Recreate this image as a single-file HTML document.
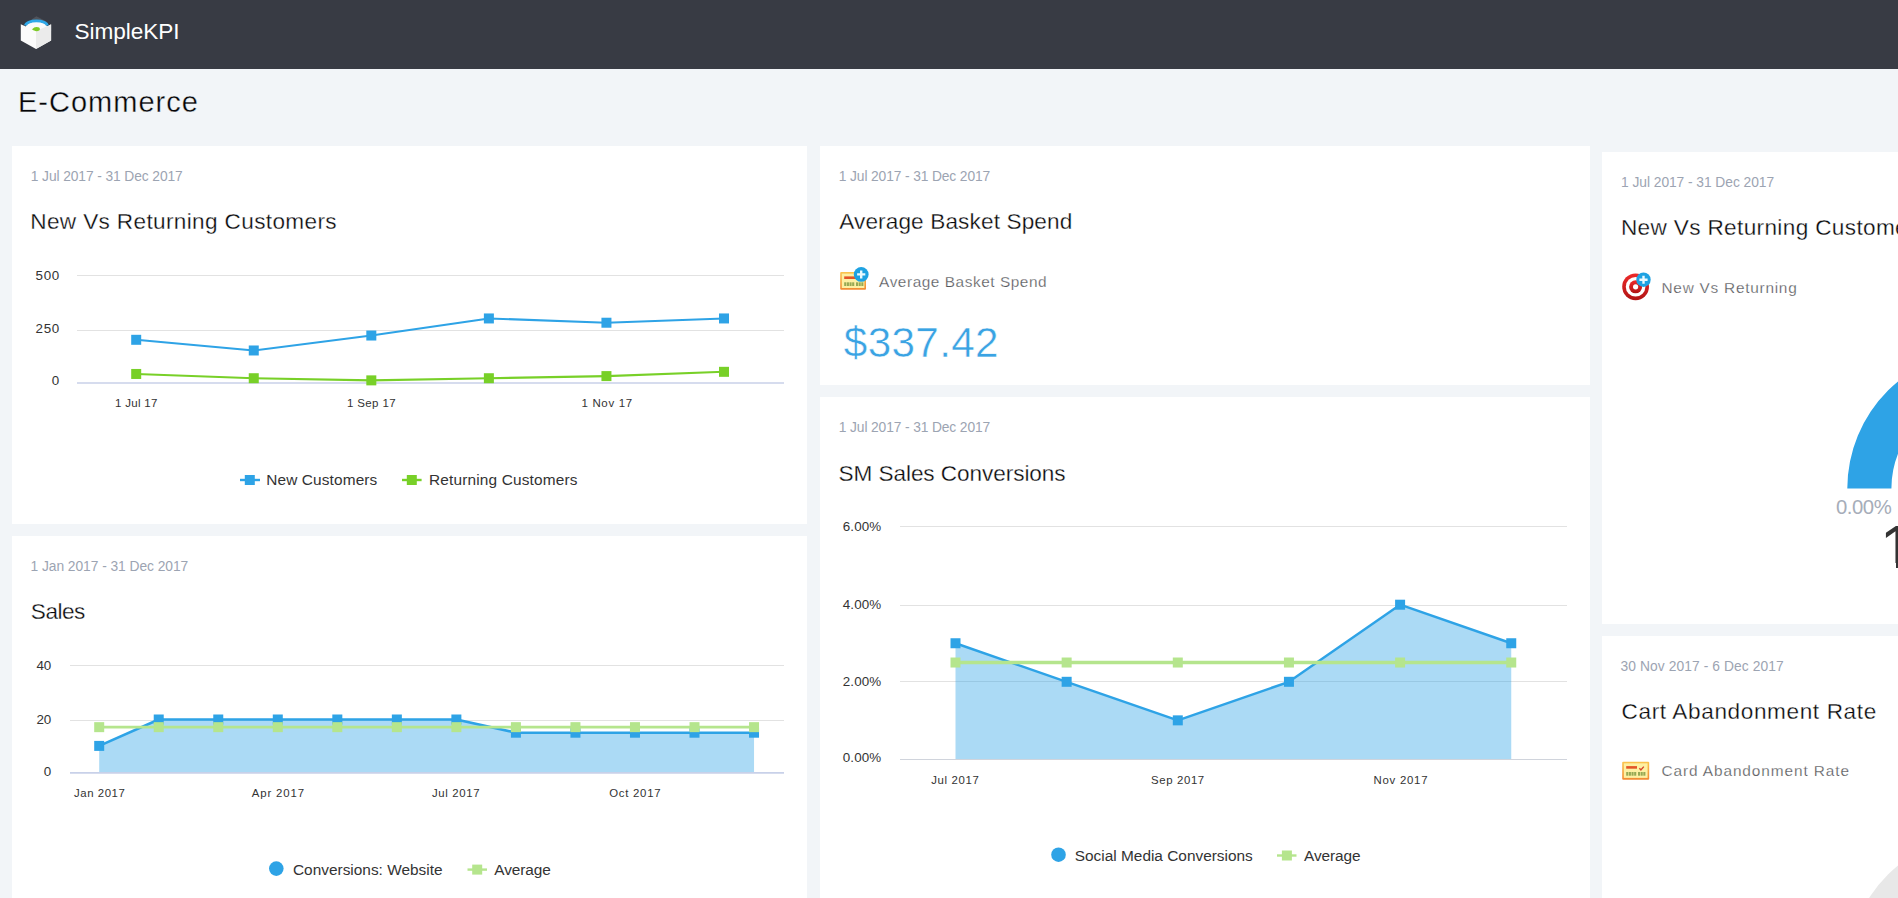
<!DOCTYPE html>
<html lang="en"><head><meta charset="utf-8"><title>SimpleKPI - E-Commerce</title>
<style>
*{box-sizing:border-box}
html,body{margin:0;padding:0}
body{width:1898px;height:898px;overflow:hidden;background:#f2f5f8;font-family:"Liberation Sans", Arial, sans-serif;position:relative}
.hdr{position:absolute;left:0;top:0;width:1898px;height:68.6px;background:#383b44}
.logo{position:absolute;left:14px;top:10px}
.card{position:absolute;background:#fff;overflow:hidden}
.t{position:absolute;white-space:nowrap;font-weight:400}
.chart{position:absolute;left:0;top:0;display:block}
.foot{position:absolute;background:#fff}
</style></head><body>
<header class="hdr"><svg class="logo" width="44" height="44" viewBox="14 10 44 44">
<path d="M31.5 19.6 L36.4 16.2 L46.5 21.6 L44 23.5 Z" fill="#7d8088" opacity=".35"/>
<path d="M20.8 24.2 L25.8 26.4 A10.6 4.6 0 0 1 47 26.4 L51.1 24.2 L51.1 40.6 L36 48.9 L20.8 40.6 Z" fill="#fbfbfb"/>
<path d="M36 31 L51.1 24.4 L51.1 40.6 L36 48.9 Z" fill="#ebebeb"/>
<path d="M25.6 25.4 A10.8 4.5 0 0 1 47.2 25.4" fill="none" stroke="#2fa9ea" stroke-width="2.9"/>
<ellipse cx="36.6" cy="29.1" rx="3.3" ry="2.1" fill="#7fcb28"/>
<path d="M31.8 29.3 l2.2 -1.4 v2.6z" fill="#7fcb28"/>
</svg>
<div class="t" id="brand" style="left:74.50px;top:17.37px;font-size:22.6px;line-height:29px;color:#ffffff;letter-spacing:-0.062px;">SimpleKPI</div></header>
<div class="t" id="page" style="left:18.00px;top:82.65px;font-size:29px;line-height:38px;color:#050507;letter-spacing:1.000px;-webkit-text-stroke:0.35px #f2f5f8;">E-Commerce</div>
<section class="card" id="c1" style="left:12px;top:146px;width:795px;height:378px">
<svg class="chart" width="795" height="378" viewBox="12 146 795 378" font-family='"Liberation Sans", Arial, sans-serif'>
<line x1="77" x2="784" y1="275.5" y2="275.5" stroke="#e2e2e2" stroke-width="1.0"/>
<line x1="77" x2="784" y1="330.5" y2="330.5" stroke="#e2e2e2" stroke-width="1.0"/>
<line x1="77" x2="784" y1="383" y2="383" stroke="#c8d1e9" stroke-width="1.6"/>
<text x="59.20" y="279.70" font-size="13.4" text-anchor="end" fill="#333333" textLength="23.6" lengthAdjust="spacing">500</text>
<text x="59.20" y="333.40" font-size="13.4" text-anchor="end" fill="#333333" textLength="23.6" lengthAdjust="spacing">250</text>
<text x="59.20" y="385.20" font-size="13.4" text-anchor="end" fill="#333333">0</text>
<polyline points="136.20,339.80 253.76,350.48 371.32,335.53 488.88,318.45 606.44,322.72 724.00,318.45" fill="none" stroke="#2ea3e6" stroke-width="2.1" stroke-linejoin="round" stroke-linecap="round"/>
<rect x="131.20" y="334.80" width="10.0" height="10.0" fill="#2ea3e6"/>
<rect x="248.76" y="345.48" width="10.0" height="10.0" fill="#2ea3e6"/>
<rect x="366.32" y="330.53" width="10.0" height="10.0" fill="#2ea3e6"/>
<rect x="483.88" y="313.45" width="10.0" height="10.0" fill="#2ea3e6"/>
<rect x="601.44" y="317.72" width="10.0" height="10.0" fill="#2ea3e6"/>
<rect x="719.00" y="313.45" width="10.0" height="10.0" fill="#2ea3e6"/>
<polyline points="136.20,373.96 253.76,378.23 371.32,380.37 488.88,378.23 606.44,376.10 724.00,371.82" fill="none" stroke="#78d028" stroke-width="2.1" stroke-linejoin="round" stroke-linecap="round"/>
<rect x="131.20" y="368.96" width="10.0" height="10.0" fill="#78d028"/>
<rect x="248.76" y="373.23" width="10.0" height="10.0" fill="#78d028"/>
<rect x="366.32" y="375.37" width="10.0" height="10.0" fill="#78d028"/>
<rect x="483.88" y="373.23" width="10.0" height="10.0" fill="#78d028"/>
<rect x="601.44" y="371.10" width="10.0" height="10.0" fill="#78d028"/>
<rect x="719.00" y="366.82" width="10.0" height="10.0" fill="#78d028"/>
<text x="136.20" y="407.00" font-size="11.5" text-anchor="middle" fill="#333333" textLength="42.2" lengthAdjust="spacing">1 Jul 17</text>
<text x="371.30" y="407.00" font-size="11.5" text-anchor="middle" fill="#333333" textLength="48.6" lengthAdjust="spacing">1 Sep 17</text>
<text x="606.80" y="407.00" font-size="11.5" text-anchor="middle" fill="#333333" textLength="50.7" lengthAdjust="spacing">1 Nov 17</text>
<line x1="240" x2="260" y1="480" y2="480" stroke="#2ea3e6" stroke-width="2.4"/>
<rect x="244.80" y="475.00" width="10.0" height="10.0" fill="#2ea3e6"/>
<text x="266.30" y="485.00" font-size="15.4" text-anchor="start" fill="#333333" textLength="111.0" lengthAdjust="spacing">New Customers</text>
<line x1="402" x2="421.6" y1="480" y2="480" stroke="#78d028" stroke-width="2.4"/>
<rect x="406.80" y="475.00" width="10.0" height="10.0" fill="#78d028"/>
<text x="429.00" y="485.00" font-size="15.4" text-anchor="start" fill="#333333" textLength="148.5" lengthAdjust="spacing">Returning Customers</text>
</svg>
<div class="t" id="c1d" style="left:18.80px;top:21.82px;font-size:13.8px;line-height:18px;color:#9ca4b2;letter-spacing:-0.096px;">1 Jul 2017 - 31 Dec 2017</div>
<div class="t" id="c1t" style="left:18.30px;top:61.17px;font-size:22.6px;line-height:29px;color:#08080a;letter-spacing:0.348px;-webkit-text-stroke:0.3px #fff;">New Vs Returning Customers</div>
</section>
<section class="card" id="c2" style="left:12px;top:536px;width:795px;height:372px">
<svg class="chart" width="795" height="372" viewBox="12 536 795 372" font-family='"Liberation Sans", Arial, sans-serif'>
<line x1="70" x2="784" y1="665.5" y2="665.5" stroke="#e2e2e2" stroke-width="1.0"/>
<line x1="70" x2="784" y1="720.5" y2="720.5" stroke="#e2e2e2" stroke-width="1.0"/>
<text x="51.30" y="670.10" font-size="13.4" text-anchor="end" fill="#333333">40</text>
<text x="51.30" y="724.10" font-size="13.4" text-anchor="end" fill="#333333">20</text>
<text x="51.30" y="776.10" font-size="13.4" text-anchor="end" fill="#333333">0</text>
<path d="M99.20 745.90 L158.73 719.50 L218.26 719.50 L277.79 719.50 L337.32 719.50 L396.85 719.50 L456.38 719.50 L515.91 732.70 L575.44 732.70 L634.97 732.70 L694.50 732.70 L754.03 732.70 L754.03 772.3 L99.20 772.3 Z" fill="#2ea3e6" fill-opacity="0.4"/>
<line x1="70" x2="784" y1="772.9" y2="772.9" stroke="#c8d1e9" stroke-width="1.6"/>
<polyline points="99.20,745.90 158.73,719.50 218.26,719.50 277.79,719.50 337.32,719.50 396.85,719.50 456.38,719.50 515.91,732.70 575.44,732.70 634.97,732.70 694.50,732.70 754.03,732.70" fill="none" stroke="#2ea3e6" stroke-width="2.6" stroke-linejoin="round" stroke-linecap="round"/>
<rect x="94.20" y="740.90" width="10.0" height="10.0" fill="#2ea3e6"/>
<rect x="153.73" y="714.50" width="10.0" height="10.0" fill="#2ea3e6"/>
<rect x="213.26" y="714.50" width="10.0" height="10.0" fill="#2ea3e6"/>
<rect x="272.79" y="714.50" width="10.0" height="10.0" fill="#2ea3e6"/>
<rect x="332.32" y="714.50" width="10.0" height="10.0" fill="#2ea3e6"/>
<rect x="391.85" y="714.50" width="10.0" height="10.0" fill="#2ea3e6"/>
<rect x="451.38" y="714.50" width="10.0" height="10.0" fill="#2ea3e6"/>
<rect x="510.91" y="727.70" width="10.0" height="10.0" fill="#2ea3e6"/>
<rect x="570.44" y="727.70" width="10.0" height="10.0" fill="#2ea3e6"/>
<rect x="629.97" y="727.70" width="10.0" height="10.0" fill="#2ea3e6"/>
<rect x="689.50" y="727.70" width="10.0" height="10.0" fill="#2ea3e6"/>
<rect x="749.03" y="727.70" width="10.0" height="10.0" fill="#2ea3e6"/>
<polyline points="99.20,727.16 158.73,727.16 218.26,727.16 277.79,727.16 337.32,727.16 396.85,727.16 456.38,727.16 515.91,727.16 575.44,727.16 634.97,727.16 694.50,727.16 754.03,727.16" fill="none" stroke="#b5e58d" stroke-width="2.9" stroke-linejoin="round" stroke-linecap="round"/>
<rect x="94.20" y="722.16" width="10.0" height="10.0" fill="#b5e58d"/>
<rect x="153.73" y="722.16" width="10.0" height="10.0" fill="#b5e58d"/>
<rect x="213.26" y="722.16" width="10.0" height="10.0" fill="#b5e58d"/>
<rect x="272.79" y="722.16" width="10.0" height="10.0" fill="#b5e58d"/>
<rect x="332.32" y="722.16" width="10.0" height="10.0" fill="#b5e58d"/>
<rect x="391.85" y="722.16" width="10.0" height="10.0" fill="#b5e58d"/>
<rect x="451.38" y="722.16" width="10.0" height="10.0" fill="#b5e58d"/>
<rect x="510.91" y="722.16" width="10.0" height="10.0" fill="#b5e58d"/>
<rect x="570.44" y="722.16" width="10.0" height="10.0" fill="#b5e58d"/>
<rect x="629.97" y="722.16" width="10.0" height="10.0" fill="#b5e58d"/>
<rect x="689.50" y="722.16" width="10.0" height="10.0" fill="#b5e58d"/>
<rect x="749.03" y="722.16" width="10.0" height="10.0" fill="#b5e58d"/>
<text x="99.40" y="796.80" font-size="11.4" text-anchor="middle" fill="#333333" textLength="50.7" lengthAdjust="spacing">Jan 2017</text>
<text x="277.90" y="796.80" font-size="11.4" text-anchor="middle" fill="#333333" textLength="52.5" lengthAdjust="spacing">Apr 2017</text>
<text x="455.80" y="796.80" font-size="11.4" text-anchor="middle" fill="#333333" textLength="47.6" lengthAdjust="spacing">Jul 2017</text>
<text x="634.90" y="796.80" font-size="11.4" text-anchor="middle" fill="#333333" textLength="51.3" lengthAdjust="spacing">Oct 2017</text>
<circle cx="276.3" cy="868.6" r="7.3" fill="#2ea3e6"/>
<text x="293.00" y="875.00" font-size="15.4" text-anchor="start" fill="#333333" textLength="149.5" lengthAdjust="spacing">Conversions: Website</text>
<line x1="467.5" x2="487" y1="869.6" y2="869.6" stroke="#b5e58d" stroke-width="2.4"/>
<rect x="472.20" y="864.60" width="10.0" height="10.0" fill="#b5e58d"/>
<text x="494.30" y="875.00" font-size="15.4" text-anchor="start" fill="#333333" textLength="56.5" lengthAdjust="spacing">Average</text>
</svg>
<div class="t" id="c2d" style="left:18.60px;top:21.82px;font-size:13.8px;line-height:18px;color:#9ca4b2;letter-spacing:-0.052px;">1 Jan 2017 - 31 Dec 2017</div>
<div class="t" id="c2t" style="left:18.80px;top:61.27px;font-size:22.6px;line-height:29px;color:#08080a;letter-spacing:-0.475px;-webkit-text-stroke:0.3px #fff;">Sales</div>
</section>
<section class="card" id="c3" style="left:820px;top:146px;width:770px;height:239px">
<svg class="chart" width="770" height="239" viewBox="820 146 770 239" font-family='"Liberation Sans", Arial, sans-serif'><defs><linearGradient id="og840" x1="0" y1="0" x2="0" y2="1"><stop offset="0" stop-color="#fbc54e"/><stop offset="1" stop-color="#f28a32"/></linearGradient></defs>
<rect x="840.2" y="272" width="25.8" height="17.8" rx="1" fill="url(#og840)"/>
<rect x="841.8000000000001" y="273.6" width="22.6" height="14.4" fill="#fdf0a2"/>
<rect x="844.2" y="276.4" width="12" height="2.6" fill="#e35427"/>
<rect x="844.20" y="282.3" width="2.1" height="3.7" fill="#97a954"/>
<rect x="846.85" y="282.3" width="2.1" height="3.7" fill="#97a954"/>
<rect x="849.50" y="282.3" width="2.1" height="3.7" fill="#97a954"/>
<rect x="852.15" y="282.3" width="2.1" height="3.7" fill="#97a954"/>
<rect x="856.00" y="282.3" width="2.1" height="3.7" fill="#97a954"/>
<rect x="858.65" y="282.3" width="2.1" height="3.7" fill="#97a954"/>
<rect x="861.30" y="282.3" width="2.1" height="3.7" fill="#97a954"/>
<circle cx="861.2" cy="274.4" r="7.4" fill="#1ea2e2"/><path d="M857.1 274.4H865.3000000000001M861.2 270.4V278.4" stroke="#eafaff" stroke-width="2.4"/></svg>
<div class="t" id="c3d" style="left:18.80px;top:21.72px;font-size:13.8px;line-height:18px;color:#9ca4b2;letter-spacing:-0.122px;">1 Jul 2017 - 31 Dec 2017</div>
<div class="t" id="c3t" style="left:19.20px;top:61.07px;font-size:22.6px;line-height:29px;color:#08080a;letter-spacing:0.126px;-webkit-text-stroke:0.3px #fff;">Average Basket Spend</div>
<div class="t" id="c3s" style="left:59.10px;top:125.66px;font-size:15.4px;line-height:20px;color:#55565a;letter-spacing:0.547px;-webkit-text-stroke:0.25px #fff;">Average Basket Spend</div>
<div class="t" id="c3v" style="left:23.80px;top:169.04px;font-size:42.3px;line-height:55px;color:#3aa3e3;letter-spacing:0.317px;-webkit-text-stroke:0.5px #fff;">$337.42</div>
</section>
<section class="card" id="c4" style="left:820px;top:397px;width:770px;height:511px">
<svg class="chart" width="770" height="511" viewBox="820 397 770 511" font-family='"Liberation Sans", Arial, sans-serif'>
<line x1="900" x2="1567" y1="526.5" y2="526.5" stroke="#e2e2e2" stroke-width="1.0"/>
<line x1="900" x2="1567" y1="605.5" y2="605.5" stroke="#e2e2e2" stroke-width="1.0"/>
<line x1="900" x2="1567" y1="681.5" y2="681.5" stroke="#e2e2e2" stroke-width="1.0"/>
<text x="881.20" y="530.80" font-size="13.4" text-anchor="end" fill="#333333" textLength="38.5" lengthAdjust="spacing">6.00%</text>
<text x="881.20" y="609.20" font-size="13.4" text-anchor="end" fill="#333333" textLength="38.5" lengthAdjust="spacing">4.00%</text>
<text x="881.20" y="685.80" font-size="13.4" text-anchor="end" fill="#333333" textLength="38.5" lengthAdjust="spacing">2.00%</text>
<text x="881.20" y="761.80" font-size="13.4" text-anchor="end" fill="#333333" textLength="38.5" lengthAdjust="spacing">0.00%</text>
<path d="M955.50 643.25 L1066.65 681.80 L1177.80 720.35 L1288.95 681.80 L1400.10 604.70 L1511.25 643.25 L1511.25 758.9 L955.50 758.9 Z" fill="#2ea3e6" fill-opacity="0.4"/>
<line x1="900" x2="1567" y1="759.5" y2="759.5" stroke="#d0d4dc" stroke-width="1.0"/>
<polyline points="955.50,643.25 1066.65,681.80 1177.80,720.35 1288.95,681.80 1400.10,604.70 1511.25,643.25" fill="none" stroke="#2ea3e6" stroke-width="2.4" stroke-linejoin="round" stroke-linecap="round"/>
<rect x="950.50" y="638.25" width="10.0" height="10.0" fill="#2ea3e6"/>
<rect x="1061.65" y="676.80" width="10.0" height="10.0" fill="#2ea3e6"/>
<rect x="1172.80" y="715.35" width="10.0" height="10.0" fill="#2ea3e6"/>
<rect x="1283.95" y="676.80" width="10.0" height="10.0" fill="#2ea3e6"/>
<rect x="1395.10" y="599.70" width="10.0" height="10.0" fill="#2ea3e6"/>
<rect x="1506.25" y="638.25" width="10.0" height="10.0" fill="#2ea3e6"/>
<polyline points="955.50,662.52 1066.65,662.52 1177.80,662.52 1288.95,662.52 1400.10,662.52 1511.25,662.52" fill="none" stroke="#b5e58d" stroke-width="3.3" stroke-linejoin="round" stroke-linecap="round"/>
<rect x="950.50" y="657.52" width="10.0" height="10.0" fill="#b5e58d"/>
<rect x="1061.65" y="657.52" width="10.0" height="10.0" fill="#b5e58d"/>
<rect x="1172.80" y="657.52" width="10.0" height="10.0" fill="#b5e58d"/>
<rect x="1283.95" y="657.52" width="10.0" height="10.0" fill="#b5e58d"/>
<rect x="1395.10" y="657.52" width="10.0" height="10.0" fill="#b5e58d"/>
<rect x="1506.25" y="657.52" width="10.0" height="10.0" fill="#b5e58d"/>
<text x="955.00" y="784.00" font-size="11.4" text-anchor="middle" fill="#333333" textLength="47.5" lengthAdjust="spacing">Jul 2017</text>
<text x="1177.60" y="784.00" font-size="11.4" text-anchor="middle" fill="#333333" textLength="53.2" lengthAdjust="spacing">Sep 2017</text>
<text x="1400.50" y="784.00" font-size="11.4" text-anchor="middle" fill="#333333" textLength="54.0" lengthAdjust="spacing">Nov 2017</text>
<circle cx="1058.5" cy="854.7" r="7.3" fill="#2ea3e6"/>
<text x="1074.80" y="860.90" font-size="15.4" text-anchor="start" fill="#333333" textLength="178.0" lengthAdjust="spacing">Social Media Conversions</text>
<line x1="1277" x2="1296.5" y1="855.5" y2="855.5" stroke="#b5e58d" stroke-width="2.4"/>
<rect x="1281.90" y="850.50" width="10.0" height="10.0" fill="#b5e58d"/>
<text x="1304.00" y="860.90" font-size="15.4" text-anchor="start" fill="#333333" textLength="56.5" lengthAdjust="spacing">Average</text>
</svg>
<div class="t" id="c4d" style="left:18.80px;top:21.72px;font-size:13.8px;line-height:18px;color:#9ca4b2;letter-spacing:-0.122px;">1 Jul 2017 - 31 Dec 2017</div>
<div class="t" id="c4t" style="left:18.50px;top:61.67px;font-size:22.6px;line-height:29px;color:#08080a;letter-spacing:-0.074px;-webkit-text-stroke:0.3px #fff;">SM Sales Conversions</div>
</section>
<section class="card" id="c5" style="left:1602px;top:152px;width:306px;height:472px">
<svg class="chart" width="306" height="472" viewBox="1602 152 306 472" font-family='"Liberation Sans", Arial, sans-serif'>
<defs><linearGradient id="rg" x1="0" y1="0" x2="0" y2="1"><stop offset="0" stop-color="#ee2a2a"/><stop offset="1" stop-color="#b01414"/></linearGradient></defs>
<circle cx="1635.6" cy="286.8" r="13.4" fill="url(#rg)"/>
<circle cx="1635.6" cy="286.8" r="9.8" fill="#fff"/>
<circle cx="1635.6" cy="286.8" r="6.5" fill="url(#rg)"/>
<circle cx="1635.6" cy="286.8" r="2.6" fill="#fff"/>
<circle cx="1643.5" cy="279.7" r="7.2" fill="#1ea2e2"/><path d="M1639.4 279.7H1647.6M1643.5 275.7V283.7" stroke="#eafaff" stroke-width="2.4"/>
<path d="M1847.30 488.50 A138.7 138.7 0 0 1 2124.70 488.50 L2080.60 488.50 A94.6 94.6 0 0 0 1891.40 488.50 Z" fill="#2ea3e6"/>
</svg>
<div class="t" id="c5d" style="left:19.10px;top:21.72px;font-size:13.8px;line-height:18px;color:#9ca4b2;letter-spacing:-0.052px;">1 Jul 2017 - 31 Dec 2017</div>
<div class="t" id="c5t" style="left:18.90px;top:61.27px;font-size:22.6px;line-height:29px;color:#08080a;letter-spacing:0.348px;-webkit-text-stroke:0.3px #fff;">New Vs Returning Customers</div>
<div class="t" id="c5s" style="left:59.50px;top:126.36px;font-size:15.4px;line-height:20px;color:#55565a;letter-spacing:0.747px;-webkit-text-stroke:0.25px #fff;">New Vs Returning</div>
<div class="t" id="c5min" style="left:234.00px;top:341.77px;font-size:20.3px;line-height:26px;color:#a6adb9;letter-spacing:-0.450px;">0.00%</div>
<div class="t" id="c5v" style="left:278.10px;top:355.19px;font-size:61.5px;line-height:80px;color:#333333;letter-spacing:0.000px;">100.00%</div>
<div class="foot" style="left:281.6px;top:411.0px;width:12.1px;height:7px"></div>
</section>
<section class="card" id="c6" style="left:1602px;top:636px;width:306px;height:272px">
<svg class="chart" width="306" height="272" viewBox="1602 636 306 272" font-family='"Liberation Sans", Arial, sans-serif'>
<defs><linearGradient id="og1622" x1="0" y1="0" x2="0" y2="1"><stop offset="0" stop-color="#fbc54e"/><stop offset="1" stop-color="#f28a32"/></linearGradient></defs>
<rect x="1622.2" y="761.7" width="27" height="18" rx="1" fill="url(#og1622)"/>
<rect x="1623.8" y="763.3000000000001" width="23.8" height="14.6" fill="#fdf0a2"/>
<rect x="1626.2" y="766.1" width="10.8" height="2.6" fill="#e35427"/>
<rect x="1626.20" y="772.0" width="2.1" height="3.7" fill="#97a954"/>
<rect x="1628.85" y="772.0" width="2.1" height="3.7" fill="#97a954"/>
<rect x="1631.50" y="772.0" width="2.1" height="3.7" fill="#97a954"/>
<rect x="1634.15" y="772.0" width="2.1" height="3.7" fill="#97a954"/>
<rect x="1638.00" y="772.0" width="2.1" height="3.7" fill="#97a954"/>
<rect x="1640.65" y="772.0" width="2.1" height="3.7" fill="#97a954"/>
<rect x="1643.30" y="772.0" width="2.1" height="3.7" fill="#97a954"/>
<path d="M1639.4 768.3000000000001l1.5 1.6l2.9 -3.3" stroke="#d8452a" stroke-width="1.4" fill="none"/>
<path d="M1847.30 972.50 A138.7 138.7 0 0 1 2124.70 972.50 L2080.60 972.50 A94.6 94.6 0 0 0 1891.40 972.50 Z" fill="#e8e8e8"/>
</svg>
<div class="t" id="c6d" style="left:18.60px;top:21.72px;font-size:13.8px;line-height:18px;color:#9ca4b2;letter-spacing:0.087px;">30 Nov 2017 - 6 Dec 2017</div>
<div class="t" id="c6t" style="left:19.60px;top:61.27px;font-size:22.6px;line-height:29px;color:#08080a;letter-spacing:0.610px;-webkit-text-stroke:0.3px #fff;">Cart Abandonment Rate</div>
<div class="t" id="c6s" style="left:59.50px;top:125.26px;font-size:15.4px;line-height:20px;color:#55565a;letter-spacing:0.905px;-webkit-text-stroke:0.25px #fff;">Card Abandonment Rate</div>
</section>
</body></html>
